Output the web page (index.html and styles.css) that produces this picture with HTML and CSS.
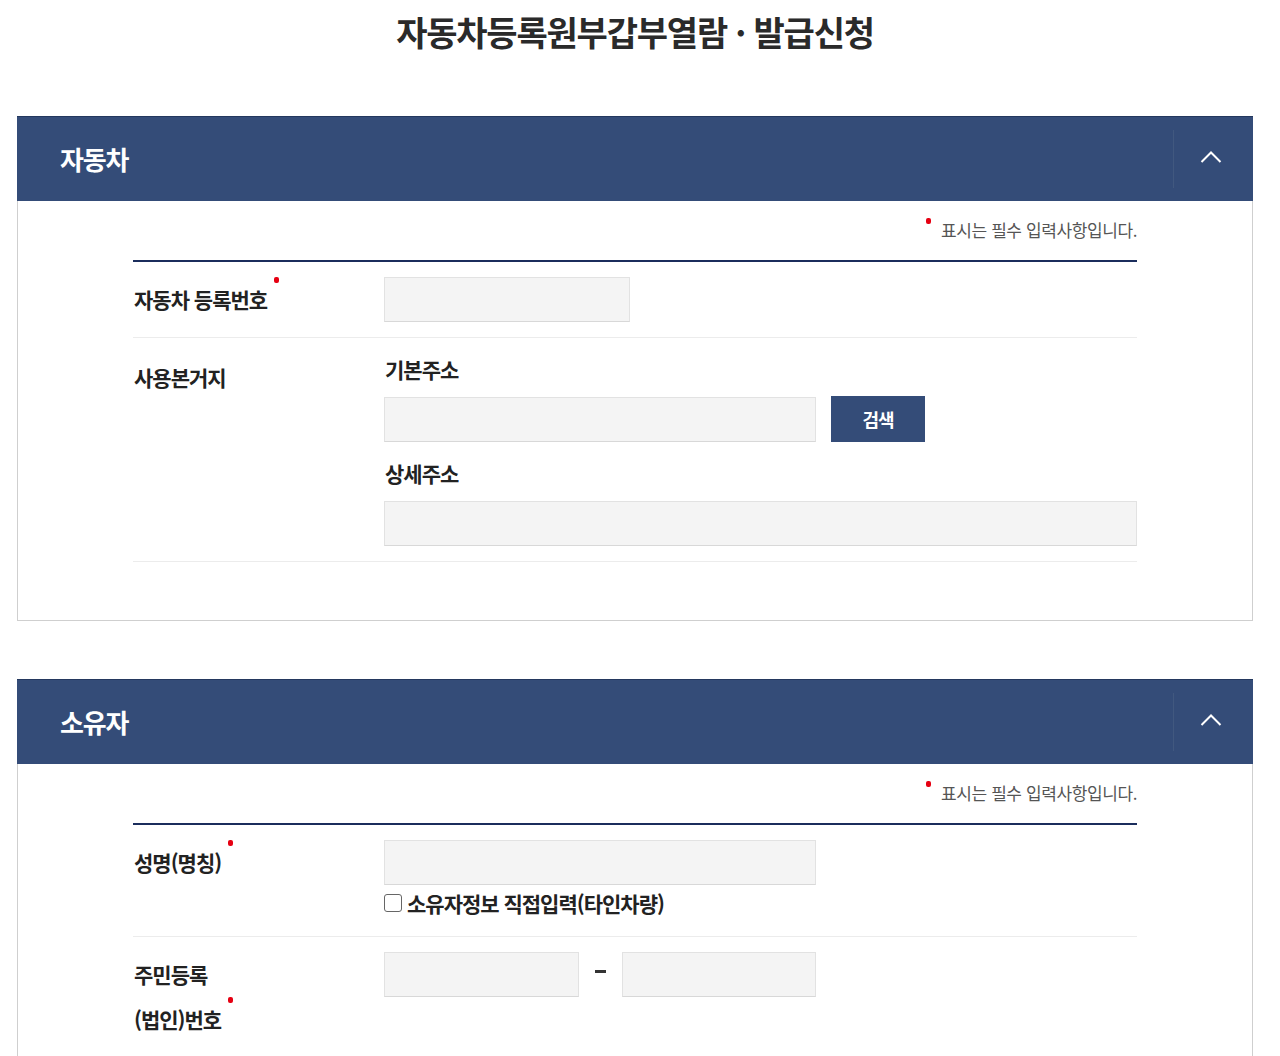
FILE: index.html
```html
<!DOCTYPE html>
<html lang="ko">
<head>
<meta charset="utf-8">
<title>자동차등록원부갑부열람·발급신청</title>
<link rel="stylesheet" href="styles.css">
</head>
<body>
<div class="page">
  <h1 class="page-title">자동차등록원부갑부열람 · 발급신청</h1>

  <section class="panel">
    <div class="panel-head">
      <h2 class="panel-title">자동차</h2>
      <button class="toggle" type="button" aria-label="접기">
        <svg width="22" height="14" viewBox="0 0 22 14"><path d="M1.5 12 L11 2.5 L20.5 12" fill="none" stroke="#fff" stroke-width="2"/></svg>
      </button>
    </div>
    <div class="panel-body">
      <p class="note"><span class="req"></span>표시는 필수 입력사항입니다.</p>
      <div class="form">
        <div class="row">
          <div class="label">자동차 등록번호<span class="req"></span></div>
          <div class="field"><input class="inp w246" type="text"></div>
        </div>
        <div class="row">
          <div class="label label-low">사용본거지</div>
          <div class="field">
            <div class="sub-label">기본주소</div>
            <div class="line">
              <input class="inp w432" type="text">
              <button class="btn" type="button">검색</button>
            </div>
            <div class="sub-label sub-label-2">상세주소</div>
            <input class="inp wfull" type="text">
          </div>
        </div>
      </div>
    </div>
  </section>

  <section class="panel">
    <div class="panel-head">
      <h2 class="panel-title">소유자</h2>
      <button class="toggle" type="button" aria-label="접기">
        <svg width="22" height="14" viewBox="0 0 22 14"><path d="M1.5 12 L11 2.5 L20.5 12" fill="none" stroke="#fff" stroke-width="2"/></svg>
      </button>
    </div>
    <div class="panel-body">
      <p class="note"><span class="req"></span>표시는 필수 입력사항입니다.</p>
      <div class="form">
        <div class="row">
          <div class="label">성명(명칭)<span class="req"></span></div>
          <div class="field">
            <input class="inp w432" type="text">
            <label class="check"><span class="box"></span>소유자정보 직접입력(타인차량)</label>
          </div>
        </div>
        <div class="row">
          <div class="label">주민등록<br>(법인)번호<span class="req"></span></div>
          <div class="field">
            <div class="line">
              <input class="inp w195" type="text">
              <span class="dash"></span>
              <input class="inp w194" type="text">
            </div>
          </div>
        </div>
      </div>
    </div>
  </section>
</div>
</body>
</html>
```
FILE: styles.css
```css
* { box-sizing: border-box; }
html, body { margin: 0; padding: 0; background: #fff; }
body {
  font-family: "Noto Sans CJK KR", "Noto Sans", sans-serif;
  color: #222;
}
.page {
  width: 1236px;
  margin-left: 17px;
  padding-top: 12px;
}
.page-title {
  margin: 0 0 64px;
  text-align: center;
  font-size: 34px;
  line-height: 40px;
  font-weight: 700;
  letter-spacing: -1.2px;
  color: #2a2a2a;
}
.panel { margin-bottom: 58px; }
.panel-head {
  height: 85px;
  background: #344c78;
  border-top: 1px solid #24385e;
  display: flex;
  align-items: center;
  justify-content: space-between;
}
.panel-title {
  margin: 0 0 0 43px;
  color: #fff;
  font-size: 26px;
  line-height: 30px;
  font-weight: 700;
  letter-spacing: -1.2px;
}
.toggle {
  width: 80px;
  height: 58px;
  margin: 0;
  padding: 0 5px 4px 0;
  background: transparent;
  border: 0;
  border-left: 1px solid #41587f;
  display: flex;
  align-items: center;
  justify-content: center;
}
.panel-body {
  border: 1px solid #cfcfcf;
  border-top: 0;
  padding: 19px 115px 58px;
}
.note {
  margin: 0 0 20px;
  text-align: right;
  font-size: 17px;
  line-height: 20px;
  letter-spacing: -0.4px;
  color: #555;
}
.note .req { margin: -2px 10px 0 0; }
.req {
  display: inline-block;
  width: 5px;
  height: 6px;
  border-radius: 2px;
  background: #e60012;
  vertical-align: top;
  margin-left: 7px;
}
.form { border-top: 2px solid #1b2d5c; }
.row {
  display: grid;
  grid-template-columns: 251px 1fr;
  padding: 15px 0;
  border-bottom: 1px solid #ececec;
}
.label {
  font-size: 21px;
  line-height: 45px;
  font-weight: 700;
  letter-spacing: -1px;
  color: #222;
  padding-left: 1px;
}
.label-low { padding-top: 2px; }
.field { display: flex; flex-direction: column; align-items: flex-start; }
.sub-label {
  font-size: 21px;
  line-height: 32px;
  font-weight: 700;
  letter-spacing: -1px;
  margin-bottom: 11px;
  padding-left: 1px;
}
.sub-label-2 { margin-top: 15px; margin-bottom: 12px; }
.line { display: flex; align-items: center; }
.inp {
  height: 45px;
  margin: 0;
  background: #f4f4f4;
  border: 1px solid #e2e2e2;
  border-bottom-color: #d8d8d8;
  border-radius: 0;
  padding: 0 10px;
  font: inherit;
}
.w246 { width: 246px; }
.w432 { width: 432px; }
.w195 { width: 195px; }
.w194 { width: 194px; }
.wfull { width: 100%; }
.btn {
  width: 94px;
  height: 46px;
  margin: 0 0 0 15px;
  background: #344c78;
  border: 0;
  color: #fff;
  font-family: inherit;
  font-size: 18px;
  font-weight: 700;
  letter-spacing: -1px;
}
.check {
  display: flex;
  align-items: center;
  font-size: 21px;
  line-height: 36px;
  font-weight: 700;
  letter-spacing: -1px;
  color: #222;
}
.box {
  width: 18px;
  height: 18px;
  border: 1.5px solid #666;
  border-radius: 3px;
  background: #fff;
  margin-right: 5px;
}
.dash {
  display: flex;
  justify-content: center;
  width: 43px;
  height: 45px;
  padding-top: 18px;
}
.dash::before {
  content: "";
  width: 11px;
  height: 3px;
  background: #333;
}
```
